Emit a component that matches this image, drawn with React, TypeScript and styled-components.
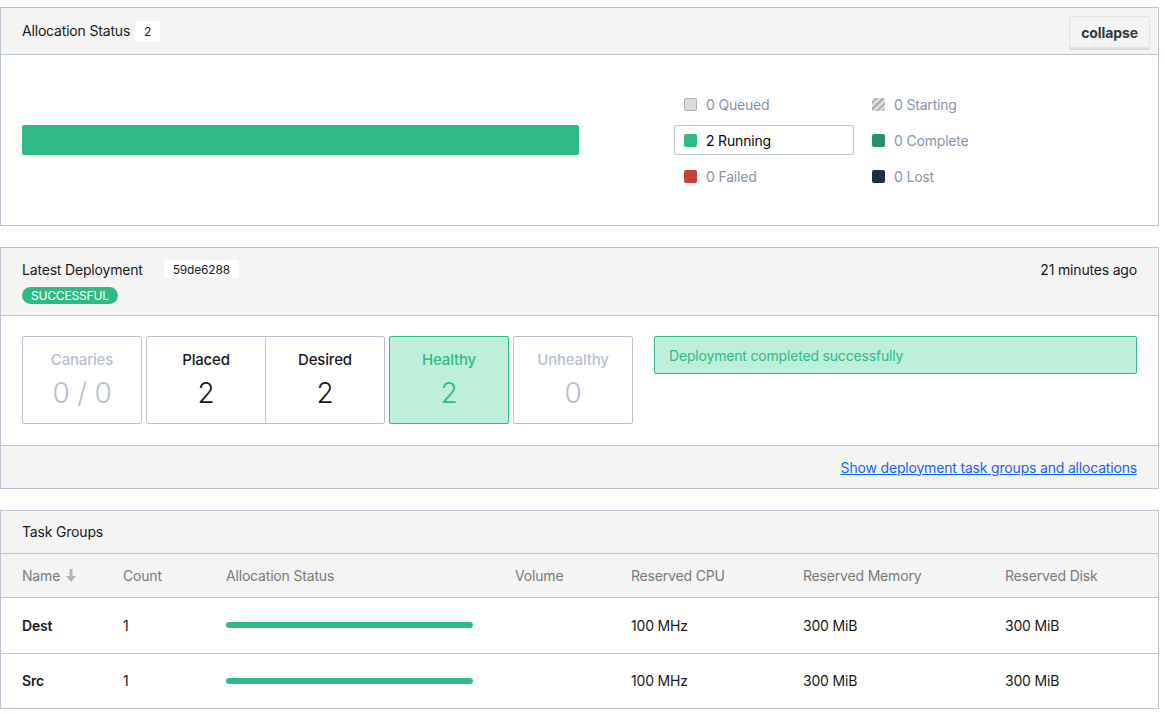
import React from "react";
import styled, { createGlobalStyle, css } from "styled-components";

const GlobalStyle = createGlobalStyle`
  * { box-sizing: border-box; }
  html, body { margin: 0; padding: 0; background: #ffffff; }
  body {
    font-family: Inter, "Noto Sans", "Liberation Sans", sans-serif;
    font-size: 14px;
    letter-spacing: -0.18px;
    color: #0a0a0a;
  }
`;

const BORDER = "#bcc6d2";
const HEAD_BG = "#f4f4f4";
const GREEN = "#31ba85";
const GREEN_LIGHT = "#bdefdb";
const MUTED = "#8795ab";

const Page = styled.div`
  width: 1159px;
  padding-top: 7px;
  display: flex;
  flex-direction: column;
  gap: 21px;
`;

const Section = styled.section`
  border: 1px solid ${BORDER};
  background: #fff;
`;

const Head = styled.div<{ $h?: number }>`
  height: ${(p) => p.$h ?? 47}px;
  background: ${HEAD_BG};
  border-bottom: 1px solid ${BORDER};
  display: flex;
  align-items: center;
  padding: 0 8px 0 21px;
  font-size: 14px;
  color: #1a1a1a;
`;

const HeadTitle = styled.span`
  line-height: 20px;
`;

const CountBadge = styled.span`
  margin-left: 5px;
  background: #fff;
  height: 21px;
  min-width: 25px;
  padding: 0 8px;
  display: inline-flex;
  align-items: center;
  justify-content: center;
  font-size: 12px;
  color: #1a1a1a;
`;

const CollapseButton = styled.button`
  margin-left: auto;
  width: 81px;
  height: 32px;
  margin-top: 2px;
  background: #f4f4f4;
  border: 1px solid #e4e4e4;
  border-radius: 2px;
  box-shadow: 0 2px 0 0 #dcdcdc;
  font-family: inherit;
  font-size: 14px;
  font-weight: 700;
  letter-spacing: -0.1px;
  color: #2f3a46;
  cursor: pointer;
`;

const AllocBody = styled.div`
  padding: 34px 21px;
  display: flex;
  align-items: center;
  gap: 95px;
`;

const BigBar = styled.div`
  flex: 0 0 557px;
  height: 30px;
  border-radius: 2px;
  background: ${GREEN};
`;

const Legend = styled.ul`
  list-style: none;
  margin: 0;
  padding: 0;
  display: grid;
  grid-template-columns: 180px 180px;
  grid-template-rows: repeat(3, 30px);
  grid-auto-flow: column;
  column-gap: 8px;
  row-gap: 6px;
`;

const LegendItem = styled.li<{ $active?: boolean }>`
  display: flex;
  align-items: center;
  gap: 9px;
  padding-left: 9px;
  border: 1px solid ${(p) => (p.$active ? BORDER : "transparent")};
  border-radius: 2px;
  color: ${(p) => (p.$active ? "#0a0a0a" : MUTED)};
  font-size: 14px;
`;

type SwatchKind = "queued" | "starting" | "running" | "complete" | "failed" | "lost";

const swatchStyles: Record<SwatchKind, ReturnType<typeof css>> = {
  queued: css`
    background: #dcdcdc;
    border: 1px solid #b0b0b0;
  `,
  starting: css`
    background: repeating-linear-gradient(
      -45deg,
      #b5b5b5 0px,
      #b5b5b5 2.5px,
      #e2e2e2 2.5px,
      #e2e2e2 4.5px
    );
  `,
  running: css`
    background: ${GREEN};
  `,
  complete: css`
    background: #25936a;
  `,
  failed: css`
    background: #c9403a;
  `,
  lost: css`
    background: #1f2d3f;
  `,
};

const Swatch = styled.span<{ $kind: SwatchKind }>`
  width: 13px;
  height: 13px;
  border-radius: 2px;
  flex: 0 0 13px;
  ${(p) => swatchStyles[p.$kind]}
`;

const DeployHead = styled.div`
  background: ${HEAD_BG};
  border-bottom: 1px solid ${BORDER};
  padding: 10px 21px 11px;
  display: flex;
  flex-direction: column;
  gap: 7px;
  align-items: flex-start;
`;

const DeployTopRow = styled.div`
  align-self: stretch;
  height: 22px;
  display: flex;
  align-items: center;
  color: #1a1a1a;
`;

const IdBadge = styled.span`
  margin-left: 21px;
  background: #fff;
  height: 18px;
  padding: 0 9px;
  display: inline-flex;
  align-items: center;
  font-size: 12px;
  color: #1a1a1a;
`;

const TimeAgo = styled.span`
  margin-left: auto;
`;

const StatusPill = styled.span`
  background: ${GREEN};
  color: #fff;
  height: 17px;
  border-radius: 9px;
  padding: 0 9px;
  font-size: 12px;
  display: inline-flex;
  align-items: center;
`;

const DeployBody = styled.div`
  padding: 20px 21px 21px;
  display: flex;
  align-items: flex-start;
  gap: 4px;
`;

type Tone = "muted" | "normal" | "good";

const cardTone = (t: Tone) => {
  if (t === "good")
    return css`
      background: ${GREEN_LIGHT};
      border-color: ${GREEN};
      color: ${GREEN};
    `;
  if (t === "muted")
    return css`
      color: #b6c1cf;
    `;
  return css`
    color: #1a1a1a;
  `;
};

const StatCard = styled.div<{ $tone: Tone }>`
  width: 120px;
  height: 88px;
  border: 1px solid ${BORDER};
  border-radius: 2px;
  display: flex;
  flex-direction: column;
  align-items: center;
  padding-top: 13px;
  ${(p) => cardTone(p.$tone)}
`;

const StatGroup = styled.div`
  display: flex;
  border: 1px solid ${BORDER};
  border-radius: 2px;
  height: 88px;
  & > ${StatCard} {
    border: none;
    height: 86px;
    width: 118px;
  }
  & > ${StatCard} + ${StatCard} {
    border-left: 1px solid ${BORDER};
    width: 119px;
  }
`;

const StatTitle = styled.div`
  font-size: 15px;
  line-height: 20px;
  font-weight: 500;
`;

const StatValue = styled.div`
  font-size: 28px;
  line-height: 32px;
  margin-top: 7px;
  font-weight: 300;
`;

const Notice = styled.div`
  flex: 1;
  margin-left: 17px;
  height: 38px;
  background: ${GREEN_LIGHT};
  border: 1px solid ${GREEN};
  border-radius: 2px;
  color: ${GREEN};
  display: flex;
  align-items: center;
  padding: 0 14px;
  font-size: 14px;
`;

const DeployFoot = styled.div`
  height: 43px;
  border-top: 1px solid ${BORDER};
  background: ${HEAD_BG};
  display: flex;
  align-items: center;
  justify-content: flex-end;
  padding: 0 21px;
`;

const FootLink = styled.a`
  color: #1563ff;
  text-decoration: underline;
  font-size: 14px;
  cursor: pointer;
`;

const Table = styled.table`
  width: 100%;
  border-collapse: collapse;
  table-layout: fixed;
`;

const Th = styled.th`
  height: 43px;
  background: ${HEAD_BG};
  border-bottom: 1px solid ${BORDER};
  text-align: left;
  font-weight: 400;
  font-size: 14px;
  color: #7a7a7a;
  padding: 0;
  &:first-child {
    padding-left: 21px;
  }
`;

const Td = styled.td<{ $bold?: boolean }>`
  height: 56px;
  padding: 0;
  font-size: 14px;
  color: #1a1a1a;
  font-weight: ${(p) => (p.$bold ? 600 : 400)};
  &:first-child {
    padding-left: 21px;
  }
`;

const Tr = styled.tr`
  & > td {
    border-bottom: 1px solid ${BORDER};
  }
  &:last-child > td {
    border-bottom: none;
    height: 55px;
  }
`;

const SortLabel = styled.span`
  display: inline-flex;
  align-items: center;
  gap: 6px;
`;

const MiniBar = styled.div`
  width: 247px;
  height: 6px;
  border-radius: 3px;
  background: ${GREEN};
`;

const SortArrow = () => (
  <svg width="10" height="13" viewBox="0 0 10 13" aria-hidden="true">
    <rect x="3.5" y="0" width="3" height="8" fill="#b5b5b5" />
    <polygon points="0,7 10,7 5,13" fill="#b5b5b5" />
  </svg>
);

const legend: { kind: SwatchKind; label: string; active?: boolean }[] = [
  { kind: "queued", label: "0 Queued" },
  { kind: "running", label: "2 Running", active: true },
  { kind: "failed", label: "0 Failed" },
  { kind: "starting", label: "0 Starting" },
  { kind: "complete", label: "0 Complete" },
  { kind: "lost", label: "0 Lost" },
];

const groups = [
  { name: "Dest", count: 1, cpu: "100 MHz", mem: "300 MiB", disk: "300 MiB" },
  { name: "Src", count: 1, cpu: "100 MHz", mem: "300 MiB", disk: "300 MiB" },
];

export default function App() {
  return (
    <>
      <GlobalStyle />
      <Page>
        <Section>
          <Head>
            <HeadTitle>Allocation Status</HeadTitle>
            <CountBadge>2</CountBadge>
            <CollapseButton>collapse</CollapseButton>
          </Head>
          <AllocBody>
            <BigBar />
            <Legend>
              {legend.map((l) => (
                <LegendItem key={l.label} $active={l.active}>
                  <Swatch $kind={l.kind} />
                  {l.label}
                </LegendItem>
              ))}
            </Legend>
          </AllocBody>
        </Section>

        <Section>
          <DeployHead>
            <DeployTopRow>
              <span>Latest Deployment</span>
              <IdBadge>59de6288</IdBadge>
              <TimeAgo>21 minutes ago</TimeAgo>
            </DeployTopRow>
            <StatusPill>SUCCESSFUL</StatusPill>
          </DeployHead>
          <DeployBody>
            <StatCard $tone="muted">
              <StatTitle>Canaries</StatTitle>
              <StatValue>0 / 0</StatValue>
            </StatCard>
            <StatGroup>
              <StatCard $tone="normal">
                <StatTitle>Placed</StatTitle>
                <StatValue>2</StatValue>
              </StatCard>
              <StatCard $tone="normal">
                <StatTitle>Desired</StatTitle>
                <StatValue>2</StatValue>
              </StatCard>
            </StatGroup>
            <StatCard $tone="good">
              <StatTitle>Healthy</StatTitle>
              <StatValue>2</StatValue>
            </StatCard>
            <StatCard $tone="muted">
              <StatTitle>Unhealthy</StatTitle>
              <StatValue>0</StatValue>
            </StatCard>
            <Notice>Deployment completed successfully</Notice>
          </DeployBody>
          <DeployFoot>
            <FootLink>Show deployment task groups and allocations</FootLink>
          </DeployFoot>
        </Section>

        <Section>
          <Head $h={43}>
            <HeadTitle>Task Groups</HeadTitle>
          </Head>
          <Table>
            <colgroup>
              <col style={{ width: 122 }} />
              <col style={{ width: 103 }} />
              <col style={{ width: 289 }} />
              <col style={{ width: 116 }} />
              <col style={{ width: 172 }} />
              <col style={{ width: 202 }} />
              <col />
            </colgroup>
            <thead>
              <tr>
                <Th>
                  <SortLabel>
                    Name <SortArrow />
                  </SortLabel>
                </Th>
                <Th>Count</Th>
                <Th>Allocation Status</Th>
                <Th>Volume</Th>
                <Th>Reserved CPU</Th>
                <Th>Reserved Memory</Th>
                <Th>Reserved Disk</Th>
              </tr>
            </thead>
            <tbody>
              {groups.map((g) => (
                <Tr key={g.name}>
                  <Td $bold>{g.name}</Td>
                  <Td>{g.count}</Td>
                  <Td>
                    <MiniBar />
                  </Td>
                  <Td></Td>
                  <Td>{g.cpu}</Td>
                  <Td>{g.mem}</Td>
                  <Td>{g.disk}</Td>
                </Tr>
              ))}
            </tbody>
          </Table>
        </Section>
      </Page>
    </>
  );
}
